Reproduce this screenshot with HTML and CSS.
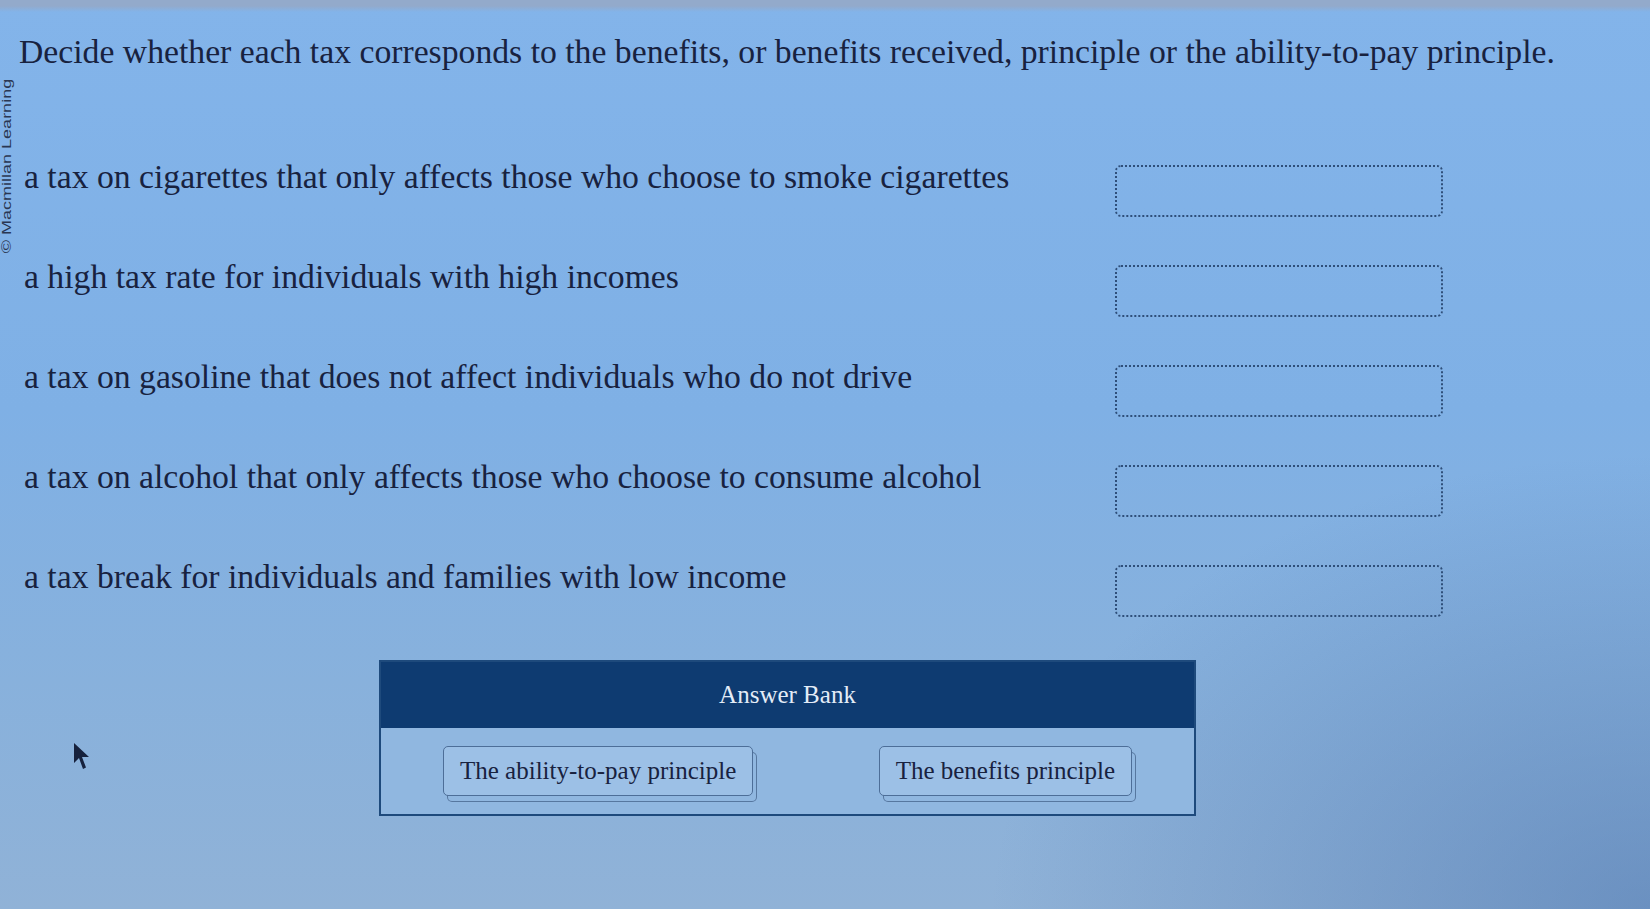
FILE: index.html
```html
<!DOCTYPE html>
<html lang="en">
<head>
  <meta charset="UTF-8">
  <meta name="viewport" content="width=device-width, initial-scale=1">
  <title>Benefits or Ability-to-Pay</title>
  <link rel="stylesheet" href="styles.css">
</head>
<body>

  <!-- Copyright strip on the left edge -->
  <span class="edge-credit">&copy; Macmillan Learning</span>

  <div class="page">
    <h1 class="prompt">Decide whether each tax corresponds to the benefits, or benefits received, principle or the ability-to-pay principle.</h1>

    <!-- Items and drop targets -->
    <div class="items">
      <div class="item">
        <p class="item-text">a tax on cigarettes that only affects those who choose to smoke cigarettes</p>
        <div class="drop"></div>
      </div>
      <div class="item">
        <p class="item-text">a high tax rate for individuals with high incomes</p>
        <div class="drop"></div>
      </div>
      <div class="item">
        <p class="item-text">a tax on gasoline that does not affect individuals who do not drive</p>
        <div class="drop"></div>
      </div>
      <div class="item">
        <p class="item-text">a tax on alcohol that only affects those who choose to consume alcohol</p>
        <div class="drop"></div>
      </div>
      <div class="item">
        <p class="item-text">a tax break for individuals and families with low income</p>
        <div class="drop"></div>
      </div>
    </div>

    <!-- Answer Bank -->
    <div class="bank">
      <div class="bank-head">Answer Bank</div>
      <div class="bank-body">
        <div class="chip">The ability-to-pay principle</div>
        <div class="chip">The benefits principle</div>
      </div>
    </div>
  </div>

  <svg class="pointer" width="20" height="30" viewBox="0 0 20 30">
    <path d="M1 1 L1 21 L6 16 L10 27 L13 25.5 L9 15 L16 15 Z" fill="#17223d"/>
  </svg>

</body>
</html>
```

FILE: styles.css
```css
/* Reset */
* {
  margin: 0;
  padding: 0;
  box-sizing: border-box;
}
body {
  font-family: 'Liberation Serif', 'Times New Roman', serif;
  color: #18223f;
  height: 100vh;
  overflow: hidden;
  position: relative;
  background:
    linear-gradient(180deg, #93aacb 0, #93aacb 6px, transparent 12px),
    radial-gradient(ellipse 40% 50% at 100% 100%, rgba(62, 104, 165, 0.45), transparent),
    linear-gradient(180deg, #83b4ea 0%, #7fb0e5 45%, #88b1dc 75%, #90b2d7 100%);
}
/* Copyright text on the left edge */
.edge-credit {
  position: absolute;
  left: -78px;
  top: 160px;
  width: 170px;
  line-height: 12px;
  transform: rotate(-90deg) scaleX(1.5);
  font-family: 'Liberation Sans', sans-serif;
  font-size: 12px;
  color: #2a3752;
  white-space: nowrap;
  text-align: center;
}
.page {
  padding: 31px 0 0 19px;
}
.prompt {
  font-size: 33.7px;
  font-weight: normal;
  line-height: 42px;
  white-space: nowrap;
}
/* Items */
.items {
  margin-top: 61px;
}
.item {
  display: flex;
  align-items: center;
  height: 100px;
  padding-left: 5px;
}
.item-text {
  flex: 1;
  font-size: 33.7px;
  margin-top: -14px;
}
.drop {
  width: 328px;
  height: 52px;
  margin-right: 207px;
  border: 2px dotted #2f4f7a;
  border-radius: 6px;
  margin-top: 14px;
}
/* Answer Bank */
.bank {
  width: 817px;
  margin: 26px 0 0 360px;
  border: 2px solid #1e4a7c;
}
.bank-head {
  background: #0e3b71;
  color: #e3ecf7;
  text-align: center;
  font-size: 25px;
  height: 66px;
  line-height: 66px;
}
.bank-body {
  height: 86px;
  display: flex;
  justify-content: space-between;
  align-items: center;
  padding: 0 62px 0 62px;
  background: #90b7e0;
}
.chip {
  font-size: 25px;
  padding: 0 16px;
  height: 50px;
  line-height: 48px;
  border: 1px solid #4d6e98;
  border-radius: 5px;
  background: #9cc0e6;
  box-shadow: 4px 6px 0 -1px #90b7e0, 4px 6px 0 0 #56779f;
}
/* Mouse pointer */
.pointer {
  position: absolute;
  left: 73px;
  top: 742px;
}
```
